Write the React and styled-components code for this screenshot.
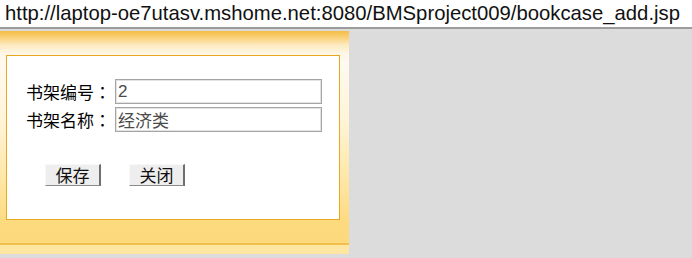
import styled, { createGlobalStyle } from "styled-components";

const GlobalStyle = createGlobalStyle`
    html, body {
        margin: 0;
        padding: 0;
        background: #dcdcdc;
    }
    body {
        font-family: "Liberation Sans", Arial, sans-serif;
    }
`;

const AddressBar = styled.div`
    height: 27px;
    background: #ffffff;
    border-bottom: 2px solid #9c9c9c;
    box-shadow: 0 1px 0 #c8c8c8;
    display: flex;
    align-items: center;
    padding-left: 5px;
    font-family: "Liberation Sans", Arial, sans-serif;
    font-size: 20.3px;
    color: #111;
    white-space: nowrap;
    overflow: hidden;
`;

const Main = styled.div`
    display: flex;
    align-items: flex-start;
    padding-top: 2px;
    height: 227px;
    background: #dcdcdc;
`;

const Panel = styled.div`
    width: 349px;
    height: 223px;
    display: flex;
    flex-direction: column;
    background: linear-gradient(
        to bottom,
        #f5bd45 0px,
        #f9d27c 7px,
        #fdeac0 14px,
        #fff6e4 22px,
        #fffaf0 32px,
        #fff4d8 90px,
        #fee6a4 150px,
        #fdda7e 192px,
        #fdd97c 100%
    );
`;

const TopBand = styled.div`
    height: 24px;
`;

const Box = styled.div`
    margin: 0 9px 0 6px;
    border: 1px solid #e8a820;
    background: #ffffff;
    padding: 23px 0 33px 19px;
    font-family: "Noto Sans CJK SC", "Liberation Sans", sans-serif;
`;

const Row = styled.div`
    display: flex;
    align-items: center;
    height: 25px;
    margin-bottom: ${(props) => (props.last ? "0" : "3px")};
`;

const Label = styled.span`
    font-size: 17px;
    color: #000;
    width: 89px;
    line-height: 25px;
    white-space: nowrap;
`;

const Colon = styled.span`
    font-family: "Noto Sans CJK TC", "Noto Sans CJK SC", sans-serif;
`;

const Input = styled.input`
    box-sizing: border-box;
    width: 207px;
    height: 25px;
    border: 1px solid #a5a5a5;
    box-shadow: inset 0 0 0 1px #e2e2e2;
    padding: 0 2px;
    font-family: "Liberation Sans", "Noto Sans CJK SC", sans-serif;
    font-size: 17px;
    color: #4a4a4a;
    background: #fff;
    outline: none;
`;

const Buttons = styled.div`
    display: flex;
    gap: 28px;
    margin-top: 32px;
    padding-left: 19px;
`;

const Button = styled.button`
    box-sizing: border-box;
    width: 56px;
    height: 22px;
    padding: 0;
    background: #eeeeee;
    border: 1px solid;
    border-color: #f8f8f8 #6e6e6e #8a8a8a #f8f8f8;
    border-right-width: 2px;
    font-family: "Noto Sans CJK SC", sans-serif;
    font-size: 17px;
    line-height: 20px;
    color: #111;
    cursor: pointer;
`;

const BottomBand = styled.div`
    flex: 1;
`;

const Rule = styled.div`
    height: 2px;
    background: #f1bf4c;
`;

const Footer = styled.div`
    height: 9px;
    background: #fde6a2;
`;

export default function App() {
    return (
        <>
            <GlobalStyle />
            <AddressBar>http://laptop-oe7utasv.mshome.net:8080/BMSproject009/bookcase_add.jsp</AddressBar>
            <Main>
                <Panel>
                    <TopBand />
                    <Box>
                        <Row>
                            <Label>书架编号<Colon>：</Colon></Label>
                            <Input defaultValue="2" />
                        </Row>
                        <Row last>
                            <Label>书架名称<Colon>：</Colon></Label>
                            <Input defaultValue="经济类" />
                        </Row>
                        <Buttons>
                            <Button>保存</Button>
                            <Button>关闭</Button>
                        </Buttons>
                    </Box>
                    <BottomBand />
                    <Rule />
                    <Footer />
                </Panel>
            </Main>
        </>
    );
}
